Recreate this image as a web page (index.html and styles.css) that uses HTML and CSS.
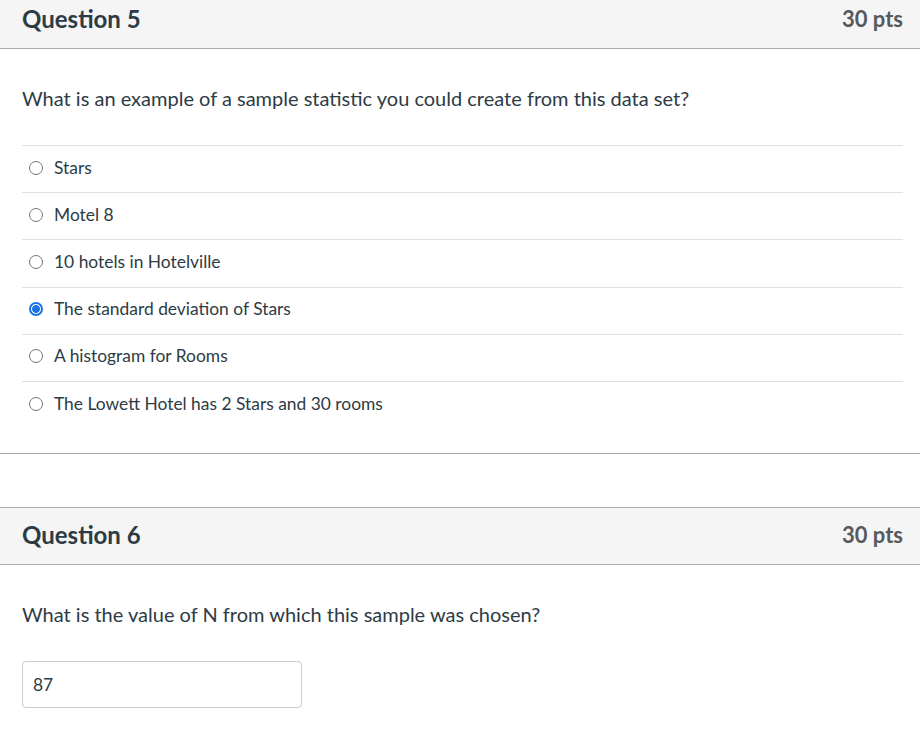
FILE: index.html
```html
<!DOCTYPE html>
<html>
<head>
<meta charset="utf-8">
<link rel="stylesheet" href="styles.css">
</head>
<body>
<div class="page">
  <div class="question">
    <div class="q-header">
      <h2 class="q-title">Question 5</h2>
      <span class="q-pts">30 pts</span>
    </div>
    <div class="q-body">
      <p class="q-text">What is an example of a sample statistic you could create from this data set?</p>
      <div class="answers">
        <div class="answer"><span class="radio"></span><span class="label">Stars</span></div>
        <div class="answer"><span class="radio"></span><span class="label">Motel 8</span></div>
        <div class="answer"><span class="radio"></span><span class="label">10 hotels in Hotelville</span></div>
        <div class="answer"><span class="radio checked"></span><span class="label">The standard deviation of Stars</span></div>
        <div class="answer"><span class="radio"></span><span class="label">A histogram for Rooms</span></div>
        <div class="answer"><span class="radio"></span><span class="label">The Lowett Hotel has 2 Stars and 30 rooms</span></div>
      </div>
    </div>
  </div>
  <div class="question last">
    <div class="q-header">
      <h2 class="q-title">Question 6</h2>
      <span class="q-pts">30 pts</span>
    </div>
    <div class="q-body">
      <p class="q-text">What is the value of N from which this sample was chosen?</p>
      <div class="input-box">87</div>
    </div>
  </div>
</div>
</body>
</html>
```
FILE: styles.css
```css
html, body {
  margin: 0;
  padding: 0;
  background: #ffffff;
}
body {
  font-family: Lato, "Open Sans", sans-serif;
  color: #2d3b45;
  overflow: hidden;
}
.page {
  margin-top: -9px;
}
.question {
  border-top: 1px solid #a9a9a9;
  border-bottom: 1px solid #a9a9a9;
  margin-bottom: 53px;
}
.q-header {
  background: #f5f5f5;
  border-bottom: 1px solid #a9a9a9;
  height: 56px;
  padding: 0 17px 0 22px;
  display: flex;
  justify-content: space-between;
  align-items: center;
}
.q-title {
  margin: -2px 0 0 0;
  font-size: 24px;
  line-height: 30px;
  font-weight: 700;
  color: #2d3b45;
}
.q-pts {
  margin-top: -2px;
  font-size: 22px;
  line-height: 30px;
  font-weight: 700;
  color: #565a5c;
}
.q-body {
  padding: 35px 17px 25px 22px;
}
.last .q-body {
  padding-bottom: 60px;
}
.q-text {
  margin: 0 0 33px 0;
  font-size: 20px;
  line-height: 28px;
}
.answer {
  border-top: 1px solid #e0e0e0;
  height: 46.2px;
  display: flex;
  align-items: center;
  padding-left: 7px;
  font-size: 17.4px;
}
.label {
  margin-top: -4px;
}
.radio {
  box-sizing: border-box;
  width: 14px;
  height: 14px;
  border: 1px solid #767676;
  border-radius: 50%;
  margin-right: 11px;
  margin-top: -3px;
  flex: none;
}
.radio.checked {
  border: 2px solid #1a73e8;
  background: radial-gradient(circle, #1a73e8 0 3.6px, #ffffff 4.2px);
}
.input-box {
  box-sizing: border-box;
  width: 280px;
  height: 47px;
  border: 1px solid #c7cdd1;
  border-radius: 4px;
  margin-top: 31px;
  padding: 0 10px;
  display: flex;
  align-items: center;
  font-size: 17.4px;
  color: #2d3b45;
}
```
